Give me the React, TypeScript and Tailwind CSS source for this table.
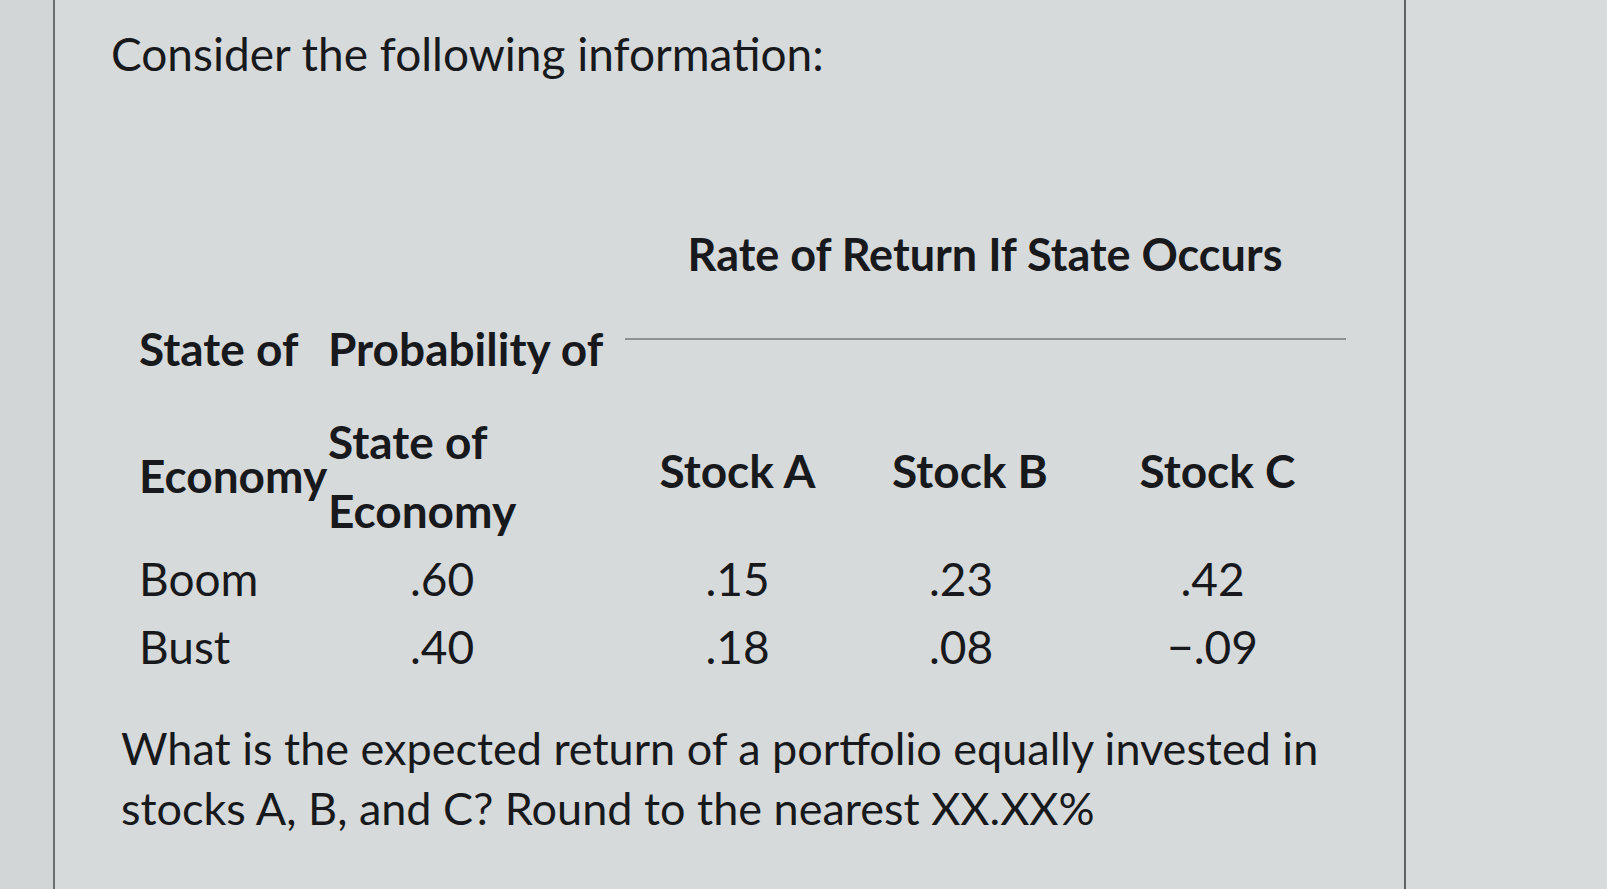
const rows = [
  { state: 'Boom', prob: '.60', a: '.15', b: '.23', c: '.42' },
  { state: 'Bust', prob: '.40', a: '.18', b: '.08', c: '\u2212.09' },
];

export default function App() {
  return (
    <div
      className="w-[1607px] h-[889px] flex overflow-hidden bg-[#d7dadb] text-[#17191c]"
      style={{ fontFamily: 'Lato, "Open Sans", sans-serif' }}
    >
      <div className="w-[53px] bg-[#d3d6d7]" />
      <div className="w-[2px] bg-[#6a6e70]" />

      <div className="w-[1349px] flex flex-col">
        <p className="mt-[26px] ml-[56px] text-[46px] leading-[56px]">Consider the following information:</p>

        <div className="ml-[84px] mt-[144px] grid grid-cols-[189px_292px_235px_230px_265px] text-[46px]">
          {/* rate of return heading */}
          <div className="col-span-2" />
          <div className="col-span-3 text-center text-[45px] font-bold leading-[56px]">Rate of Return If State Occurs</div>

          {/* first header row */}
          <div className="mt-[39px] font-bold leading-[56px]">State of</div>
          <div className="mt-[39px] font-bold leading-[56px]">Probability of</div>
          <div className="col-span-3 mt-[39px] flex items-center pb-[20px] pl-[5px] pr-[4px]">
            <div className="h-[2px] w-full bg-[#8e9294]" />
          </div>

          {/* second header row */}
          <div className="mt-[30px] flex items-center font-bold leading-[56px]">Economy</div>
          <div className="mt-[30px] font-bold leading-[69px]">
            <div>State of</div>
            <div>Economy</div>
          </div>
          <div className="mt-[30px] flex items-center justify-center pb-[12px] font-bold">Stock A</div>
          <div className="mt-[30px] flex items-center justify-center pb-[12px] font-bold">Stock B</div>
          <div className="mt-[30px] flex items-center justify-center pb-[12px] font-bold">Stock C</div>

          {rows.map((r) => (
            <div key={r.state} className="contents">
              <div className="leading-[68px]">{r.state}</div>
              <div className="pl-[82px] leading-[68px]">{r.prob}</div>
              <div className="text-center leading-[68px]">{r.a}</div>
              <div className="pr-[18px] text-center leading-[68px]">{r.b}</div>
              <div className="pr-[10px] text-center leading-[68px]">{r.c}</div>
            </div>
          ))}
        </div>

        <p className="mt-[37px] ml-[66px] whitespace-nowrap text-[45px] leading-[60px]">
          What is the expected return of a portfolio equally invested in
          <br />
          stocks A, B, and C? Round to the nearest XX.XX%
        </p>
      </div>

      <div className="w-[2px] bg-[#5e6264]" />
      <div className="flex-1 bg-[#d8dbdc]" />
    </div>
  );
}
